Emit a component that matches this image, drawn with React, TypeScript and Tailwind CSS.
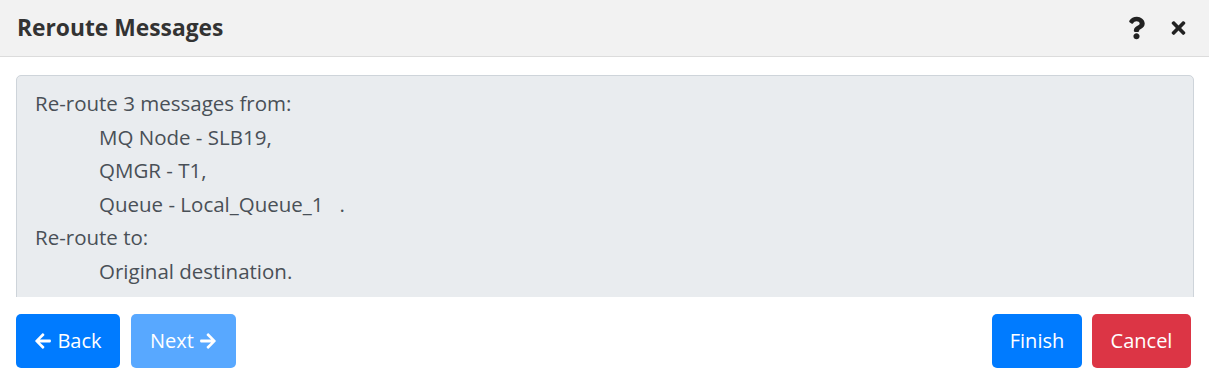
import { FaQuestion, FaTimes, FaArrowLeft, FaArrowRight } from "react-icons/fa";

const FONT = { fontFamily: '"Segoe UI", "Open Sans", "Noto Sans", sans-serif' };

const FROM_LINES = ["MQ Node - SLB19,", "QMGR - T1,", "Queue - Local_Queue_1\u00a0\u00a0\u00a0."];

export default function App() {
  return (
    <div className="w-[1209px] h-[376px] bg-white flex flex-col overflow-hidden" style={FONT}>
      {/* Header */}
      <div className="h-[57px] shrink-0 flex items-center justify-between pl-[17px] pr-[22px] bg-[#f2f2f2] border-b border-[#dcdcdc]">
        <h1 className="text-[22.8px] font-bold text-[#333333]">Reroute Messages</h1>
        <div className="flex items-center gap-[25px] text-[#222222]">
          <FaQuestion className="w-[17px] h-[24px]" />
          <FaTimes className="w-[17px] h-[20px]" />
        </div>
      </div>

      {/* Body (scroll area) */}
      <div className="h-[240px] shrink-0 overflow-hidden pt-[18px] px-[16px] pr-[15px]">
        <div className="rounded-t-[5px] border border-[#ced4da] bg-[#e9ecef] pt-[11px] pb-[12px] pl-[18px] text-[20.5px] leading-[33.5px] text-[#495057]">
          <div>Re-route 3 messages from:</div>
          {FROM_LINES.map((line) => (
            <div key={line} className="pl-[64px]">
              {line}
            </div>
          ))}
          <div>Re-route to:</div>
          <div className="pl-[64px]">Original destination.</div>
          <div className="h-[40px]" />
        </div>
      </div>

      {/* Footer */}
      <div className="flex items-center justify-between pt-[17px] pl-[16px] pr-[18px]">
        <div className="flex gap-[11px]">
          <button
            type="button"
            className="h-[54px] w-[104px] rounded-[5px] bg-[#007bff] text-white text-[20px] flex items-center justify-center gap-[5px]"
          >
            <FaArrowLeft className="w-[18px] h-[18px]" />
            Back
          </button>
          <button
            type="button"
            disabled
            className="h-[54px] w-[105px] rounded-[5px] bg-[#007bff] opacity-65 text-white text-[20px] flex items-center justify-center gap-[5px]"
          >
            Next
            <FaArrowRight className="w-[18px] h-[18px]" />
          </button>
        </div>
        <div className="flex gap-[10px]">
          <button
            type="button"
            className="h-[54px] w-[90px] rounded-[5px] bg-[#007bff] text-white text-[20px]"
          >
            Finish
          </button>
          <button
            type="button"
            className="h-[54px] w-[99px] rounded-[5px] bg-[#dc3545] text-white text-[20px]"
          >
            Cancel
          </button>
        </div>
      </div>
    </div>
  );
}
